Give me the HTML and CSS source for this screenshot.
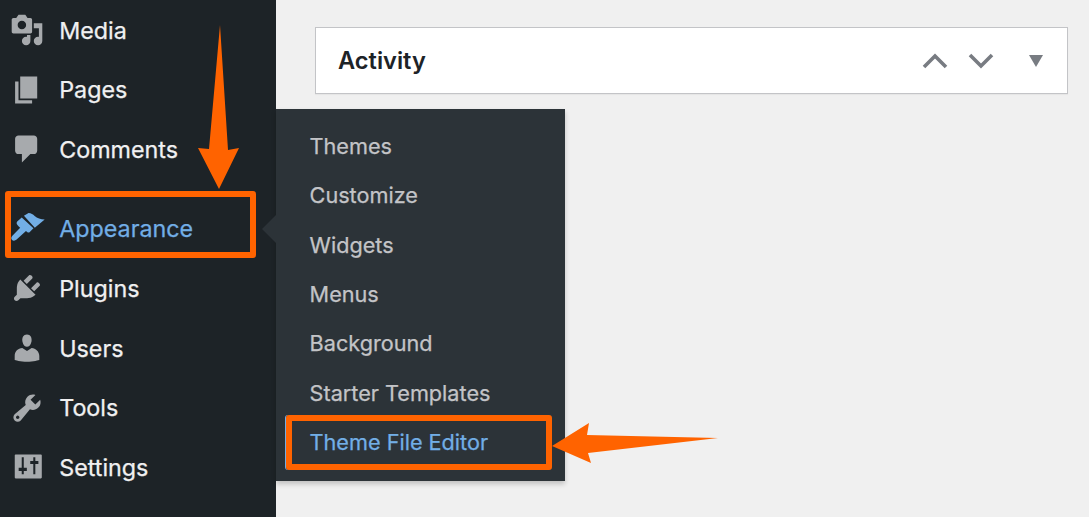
FILE: index.html
```html
<!DOCTYPE html>
<html lang="en">
<head>
<meta charset="utf-8">
<title>Appearance menu</title>
<link rel="stylesheet" href="styles.css">
</head>
<body>
<div class="page">
  <nav class="sidebar">
    <a class="item"><svg class="icon" viewBox="0 0 20 20"><path d="M13 11V4c0-.55-.45-1-1-1h-1.67L9 1H5L3.67 3H2c-.55 0-1 .45-1 1v7c0 .55.45 1 1 1h10c.55 0 1-.45 1-1zM7 4.5c1.38 0 2.5 1.12 2.5 2.5S8.38 9.5 7 9.5 4.5 8.38 4.5 7 5.62 4.5 7 4.5zM14 6h5v10.5c0 1.38-1.12 2.5-2.5 2.5S14 17.88 14 16.5s1.12-2.5 2.5-2.5c.17 0 .34.02.5.05V9h-3V6zm-4 8.05V13h2v3.5c0 1.38-1.12 2.5-2.5 2.5S7 17.88 7 16.5 8.12 14 9.5 14c.17 0 .34.02.5.05z"/></svg>Media</a>
    <a class="item"><svg class="icon" viewBox="0 0 20 20"><path d="M6 15V2h10v13H6zm-1 1h8v2H3V5h2v11z"/></svg>Pages</a>
    <a class="item"><svg class="icon" viewBox="0 0 20 20"><path d="M5 2h9c1.1 0 2 .9 2 2v7c0 1.1-.9 2-2 2h-2l-5 5v-5H5c-1.1 0-2-.9-2-2V4c0-1.1.9-2 2-2z"/></svg>Comments</a>
    <a class="item item-current"><svg class="icon" viewBox="0 0 20 20"><path d="M8.2 2.2L10.9.6C12.5.7 13.5 1.4 14.5 2.3 16 3.6 18 4.3 20.4 4.4L14.6 9.2z"/><path d="M6.9 3.2L13.8 9.6 11.5 11.9C10.8 12.4 10 11.9 9.4 11.2L3.9 16.2c-1 .9-2.2.8-2.8.1C.5 15.5.7 14.6 1.4 13.9L6 9.3C5.3 8.6 4.4 7.8 4 7 3.8 6.4 4 5.9 4.4 5.5z"/></svg>Appearance</a>
    <a class="item"><svg class="icon" viewBox="0 0 20 20"><path d="M13.11 4.36L9.87 7.6 8 5.73l3.24-3.24c.35-.34 1.05-.2 1.56.32.52.51.66 1.21.31 1.55zm-8 1.77l.91-1.12 9.01 9.01-1.19.84c-.71.71-2.63 1.16-3.82 1.16H6.14L4.9 17.26c-.59.59-1.54.59-2.12 0-.59-.58-.59-1.53 0-2.12l1.24-1.24v-3.88c0-1.13.4-3.19 1.09-3.89zm7.26 3.97l3.24-3.24c.34-.35 1.04-.21 1.55.31.52.51.66 1.21.31 1.55l-3.24 3.25z"/></svg>Plugins</a>
    <a class="item"><svg class="icon" viewBox="0 0 20 20"><path d="M10 9.25c-2.27 0-2.73-3.44-2.73-3.44C7 4.02 7.82 2 9.97 2c2.16 0 2.98 2.02 2.71 3.81 0 0-.41 3.44-2.68 3.44zm0 2.57L12.72 10c2.39 0 4.52 2.33 4.52 4.53v2.49s-3.65 1.13-7.24 1.13c-3.65 0-7.24-1.13-7.24-1.13v-2.49c0-2.25 1.94-4.48 4.47-4.48z"/></svg>Users</a>
    <a class="item"><svg class="icon" viewBox="0 0 20 20"><path d="M16.68 9.77c-1.34 1.34-3.3 1.67-4.95.99l-5.41 6.52c-.99.99-2.59.99-3.58 0s-.99-2.59 0-3.57l6.52-5.42c-.68-1.65-.35-3.61.99-4.95 1.28-1.28 3.12-1.62 4.72-1.06l-2.89 2.89 2.82 2.82 2.86-2.87c.53 1.58.18 3.39-1.08 4.65zM3.81 16.21c.4.39 1.04.39 1.43 0 .4-.4.4-1.04 0-1.43-.39-.4-1.03-.4-1.43 0-.39.39-.39 1.03 0 1.43z"/></svg>Tools</a>
    <a class="item"><svg class="icon" viewBox="0 0 20 20"><path fill-rule="evenodd" d="M3.3 2.6h14.9c.3 0 .5.2.5.5v13.1c0 .3-.2.5-.5.5H3.3c-.3 0-.5-.2-.5-.5V3.1c0-.3.2-.5.5-.5zM6.9 4.3h1.2v6.2h1.8v1.8H8.1v2h-1.2v-2H5.1v-1.8h1.8zM13.7 4.3h1.2v2.1h1.8v1.8h-1.8v6.1h-1.2V8.2h-1.8V6.4h1.8z"/></svg>Settings</a>
  </nav>
  <main class="main">
    <section class="widget">
      <h2 class="widget-title">Activity</h2>
      <div class="widget-actions">
        <svg class="chev" viewBox="0 0 26 16"><path d="M2 14L13 3l11 11"/></svg>
        <svg class="chev" viewBox="0 0 26 16"><path d="M2 2l11 11L24 2"/></svg>
        <svg class="caret" viewBox="0 0 14 12"><path d="M0 0h14L7 12z"/></svg>
      </div>
    </section>
  </main>
  <div class="flyout">
    <a class="sub">Themes</a>
    <a class="sub">Customize</a>
    <a class="sub">Widgets</a>
    <a class="sub">Menus</a>
    <a class="sub">Background</a>
    <a class="sub">Starter Templates</a>
    <a class="sub sub-current">Theme File Editor</a>
  </div>
  <div class="flyout-tip"></div>
  <div class="mark mark-appearance"></div>
  <div class="mark mark-editor"></div>
  <svg class="arrows" viewBox="0 0 1089 517"><path d="M220 25L228 150 239 148 219 189 198 148 209 149z"/><path d="M718 438L588 453 591 463 552 446 589 423 587 435z"/></svg>
</div>
</body>
</html>
```
FILE: styles.css
```css
* { box-sizing: border-box; }
html, body { margin: 0; height: 100%; overflow: hidden; }
body { font-family: Inter, "Liberation Sans", sans-serif; background: #f0f0f0; }
.page { position: relative; display: flex; width: 1089px; height: 517px; overflow: hidden; }
.sidebar { width: 276px; flex: none; background: #1d2327; display: flex; flex-direction: column; padding-top: 0.4px; }
.item { display: flex; align-items: center; gap: 15.2px; height: 59.6px; padding-left: 10px; color: #f0f0f1; font-size: 23.3px; font-weight: 400; -webkit-text-stroke: 0.25px currentColor; }
.item-current { margin-top: 19.9px; color: #72aee6; }
.icon { width: 34px; height: 34px; flex: none; fill: #a7aaad; overflow: visible; }
.item-current .icon { fill: #72aee6; }
.main { flex: 1; padding: 27px 21px 0 39px; }
.widget { display: flex; align-items: center; justify-content: space-between; height: 67px; background: #fff; border: 1px solid #c3c4c7; box-shadow: 0 1px 1px rgba(0,0,0,.04); padding: 0 24px 0 22px; }
.widget-title { margin: 0; font-size: 23.6px; font-weight: 600; color: #1d2327; }
.widget-actions { display: flex; align-items: center; gap: 20px; }
.chev { width: 26px; height: 16px; fill: none; stroke: #787c82; stroke-width: 3.6; }
.caret { width: 14px; height: 12px; fill: #787c82; margin-left: 15px; }
.flyout { position: absolute; left: 276px; top: 109px; width: 289px; height: 372px; padding: 12.2px 0 0 33.6px; background: #2c3338; box-shadow: 0 3px 5px rgba(0,0,0,.2); display: flex; flex-direction: column; }
.sub { display: flex; align-items: center; height: 49.4px; color: #c3c4c7; font-size: 21.65px; font-weight: 400; -webkit-text-stroke: 0.25px currentColor; }
.sub-current { color: #72aee6; }
.flyout-tip { position: absolute; left: 262px; top: 215px; border: 14px solid transparent; border-left-width: 0; border-right-color: #2c3338; }
.mark { position: absolute; border: 6px solid #ff6300; border-radius: 3px; }
.mark-appearance { left: 5px; top: 191px; width: 251px; height: 67px; }
.mark-editor { left: 286px; top: 415px; width: 266px; height: 55px; box-shadow: -1px 0 0 #72aee6; }
.arrows { position: absolute; left: 0; top: 0; width: 1089px; height: 517px; fill: #ff6300; pointer-events: none; }
```
